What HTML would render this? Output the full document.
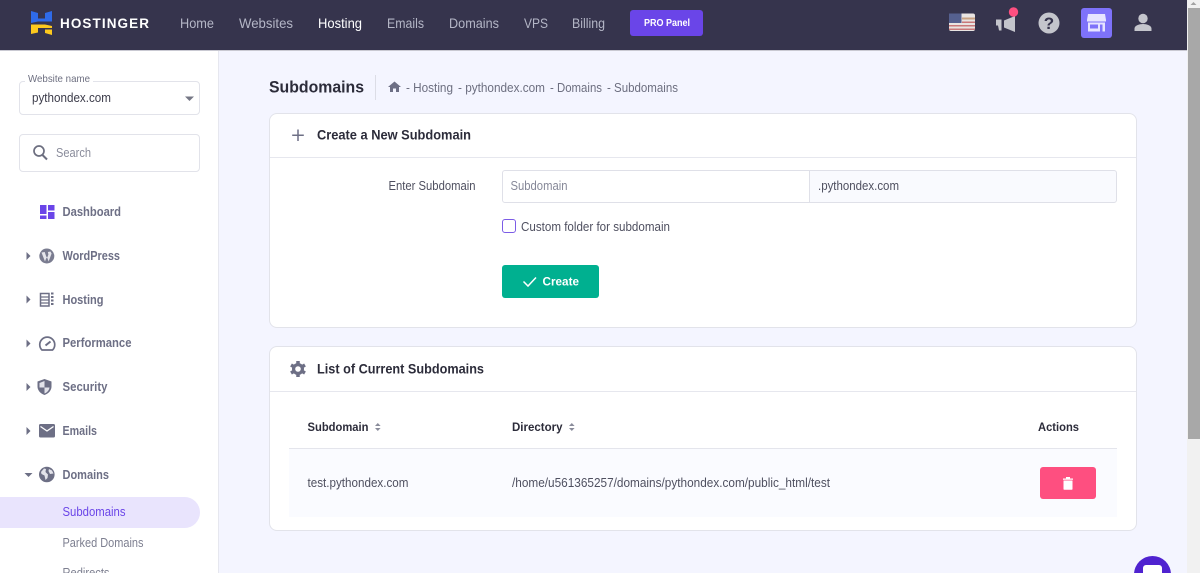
<!DOCTYPE html>
<html lang="en"><head><meta charset="utf-8"><title>Subdomains</title>
<style>
html,body{margin:0;padding:0;width:1200px;height:573px;overflow:hidden;background:#f4f5ff}
#w{position:relative;width:1200px;height:573px;overflow:hidden}
.b{position:absolute;box-sizing:border-box}
svg{position:absolute;left:0;top:0}
text{font-family:"Liberation Sans",sans-serif}
</style></head><body><div id="w">
<div class="b" style="left:0;top:0;width:1187px;height:51px;background:#36344d;border-bottom:1px solid #c9c9d2"></div>
<div class="b" style="left:0;top:51px;width:219px;height:522px;background:#fff;border-right:1px solid #e6e7ef"></div>
<div class="b" style="left:19px;top:81px;width:181px;height:34px;border:1px solid #e2e3ea;border-radius:4px"></div>
<div class="b" style="left:25px;top:76px;width:68px;height:10px;background:#fff"></div>
<div class="b" style="left:19px;top:134px;width:181px;height:38px;border:1px solid #e2e3ea;border-radius:4px"></div>
<div class="b" style="left:0;top:497px;width:200px;height:31px;background:#e9e4fd;border-radius:0 16px 16px 0"></div>
<div class="b" style="left:375px;top:75px;width:1px;height:25px;background:#dcdde6"></div>

<div class="b" style="left:269px;top:113px;width:868px;height:215px;background:#fff;border:1px solid #e2e3ea;border-radius:8px"></div>
<div class="b" style="left:270px;top:157px;width:866px;height:1px;background:#e6e7ee"></div>
<div class="b" style="left:502px;top:170px;width:308px;height:33px;background:#fff;border:1px solid #dfe0e8;border-radius:3px 0 0 3px"></div>
<div class="b" style="left:809px;top:170px;width:308px;height:33px;background:#f9fafe;border:1px solid #dfe0e8;border-radius:0 3px 3px 0"></div>
<div class="b" style="left:502px;top:219px;width:14px;height:14px;background:#fff;border:1.5px solid #7c5ce6;border-radius:3px"></div>
<div class="b" style="left:502px;top:265px;width:97px;height:33px;background:#00b090;border-radius:3px"></div>

<div class="b" style="left:269px;top:346px;width:868px;height:185px;background:#fff;border:1px solid #e2e3ea;border-radius:8px"></div>
<div class="b" style="left:270px;top:391px;width:866px;height:1px;background:#e6e7ee"></div>
<div class="b" style="left:289px;top:448px;width:828px;height:1px;background:#e4e5ec"></div>
<div class="b" style="left:289px;top:449px;width:828px;height:68px;background:#fafbff"></div>
<div class="b" style="left:1040px;top:467px;width:56px;height:32px;background:#fe4f80;border-radius:3px"></div>
<div class="b" style="left:1134px;top:556px;width:37px;height:37px;background:#4f22d0;border-radius:50%"></div>
<div class="b" style="left:1143px;top:565px;width:19px;height:12px;background:#fff;border-radius:3px"></div>

<div class="b" style="left:1187px;top:0;width:13px;height:573px;background:#f1f1f1"></div>
<div class="b" style="left:1188px;top:8px;width:12px;height:431px;background:#a8a8a8"></div>

<svg width="1200" height="573" viewBox="0 0 1200 573" xmlns="http://www.w3.org/2000/svg">
<!-- logo -->
<path d="M31 11l7 2v5.500h7v-5.500l7-2v10.500H38l-7 1.500z" fill="#2f6be8"/>
<path d="M31 24.500h14l7 1.500v2H38v4.500l-7 1.500z" fill="#fdc91e"/>
<path d="M45 29.500h7v5.500l-7-2z" fill="#fdc91e"/>
<text x="60" y="28" font-size="13.500" font-weight="700" fill="#fff" textLength="89" lengthAdjust="spacing">HOSTINGER</text>
<g font-size="14" fill="#b4b6c6">
<text x="180" y="28" textLength="34" lengthAdjust="spacingAndGlyphs">Home</text>
<text x="239" y="28" textLength="54" lengthAdjust="spacingAndGlyphs">Websites</text>
<text x="318" y="28" textLength="44" lengthAdjust="spacingAndGlyphs" fill="#fff">Hosting</text>
<text x="387" y="28" textLength="37" lengthAdjust="spacingAndGlyphs">Emails</text>
<text x="449" y="28" textLength="50" lengthAdjust="spacingAndGlyphs">Domains</text>
<text x="524" y="28" textLength="24" lengthAdjust="spacingAndGlyphs">VPS</text>
<text x="572" y="28" textLength="33" lengthAdjust="spacingAndGlyphs">Billing</text>
</g>
<rect x="630" y="10" width="73" height="26" rx="3" fill="#6a45e8"/>
<text x="644" y="26" font-size="10" font-weight="700" fill="#fff" textLength="46" lengthAdjust="spacingAndGlyphs">PRO Panel</text>

<!-- flag -->
<rect x="949" y="13.500" width="26" height="17.500" rx="2" fill="#e9e4e2"/>
<path d="M962 17.500h13v2h-13z" fill="#c9a283"/>
<path d="M962 21.500h13v1.500h-13z M949 25h26v1.500h-26z M949 28.500h26v1.500h-26z" fill="#c9787a"/>
<rect x="949" y="13.500" width="12.500" height="9.500" fill="#55608f"/>
<!-- megaphone -->
<path d="M996 19.500h5.500v11h-2.500l-1-5h-2z" fill="#c4c5cc"/>
<path d="M1004 20.500L1015 16v16l-11-4.500z" fill="#c4c5cc"/>
<circle cx="1013.500" cy="12" r="4.700" fill="#fe4f80"/>
<!-- help -->
<circle cx="1049" cy="23" r="10.500" fill="#c4c5cc"/>
<text x="1049" y="29" font-size="17" font-weight="700" fill="#36344d" text-anchor="middle">?</text>
<!-- store -->
<rect x="1081" y="8" width="31" height="30" rx="3" fill="#7e72fa"/>
<path d="M1088 14h17l1 6v1.500h-19v-1.500z" fill="#e6e4ff"/>
<path d="M1088 22.500h17v9h-17z" fill="#e6e4ff"/>
<rect x="1090" y="24.500" width="8" height="4" fill="#7e72fa"/>
<rect x="1100" y="24.500" width="2.500" height="7" fill="#7e72fa"/>
<!-- user -->
<circle cx="1143" cy="18.500" r="4.700" fill="#c4c5cc"/>
<path d="M1134.500 31v-2.500c0-3 5-4.500 8.500-4.500s8.500 1.500 8.500 4.500v2.500z" fill="#c4c5cc"/>

<!-- sidebar top -->
<text x="28" y="82" font-size="10.500" fill="#6d6f80" textLength="62" lengthAdjust="spacingAndGlyphs">Website name</text>
<text x="32" y="102" font-size="13" fill="#3c3c4a" textLength="79" lengthAdjust="spacingAndGlyphs">pythondex.com</text>
<path d="M185 96.500h9l-4.500 4.500z" fill="#757785"/>
<circle cx="39" cy="151" r="5" fill="none" stroke="#6d6f80" stroke-width="1.700"/>
<path d="M42.500 155l4.500 4.500" stroke="#6d6f80" stroke-width="2"/>
<text x="56" y="157" font-size="12.500" fill="#8a8c9b" textLength="35" lengthAdjust="spacingAndGlyphs">Search</text>

<!-- sidebar menu -->
<g font-size="12.500" font-weight="700" fill="#6d6f85">
<text x="62.500" y="216" textLength="58.500" lengthAdjust="spacingAndGlyphs">Dashboard</text>
<text x="62.500" y="260" textLength="57.500" lengthAdjust="spacingAndGlyphs">WordPress</text>
<text x="62.500" y="304" textLength="41" lengthAdjust="spacingAndGlyphs">Hosting</text>
<text x="62.500" y="347" textLength="69" lengthAdjust="spacingAndGlyphs">Performance</text>
<text x="62.500" y="391" textLength="45" lengthAdjust="spacingAndGlyphs">Security</text>
<text x="62.500" y="435" textLength="34.500" lengthAdjust="spacingAndGlyphs">Emails</text>
<text x="62.500" y="479" textLength="46.500" lengthAdjust="spacingAndGlyphs">Domains</text>
</g>
<text x="62.500" y="516" font-size="12.500" fill="#6a45e8" textLength="63" lengthAdjust="spacingAndGlyphs">Subdomains</text>
<text x="62.500" y="547" font-size="12.500" fill="#7d7f90" textLength="81" lengthAdjust="spacingAndGlyphs">Parked Domains</text>
<text x="62.500" y="577" font-size="12.500" fill="#7d7f90" textLength="47" lengthAdjust="spacingAndGlyphs">Redirects</text>

<!-- arrows -->
<g fill="#6d6f85">
<path d="M26.500 252l4 4-4 4z M26.500 295.500l4 4-4 4z M26.500 339.500l4 4-4 4z M26.500 383l4 4-4 4z M26.500 427l4 4-4 4z"/>
<path d="M24.500 473h8l-4 4z"/>
</g>
<!-- dashboard icon -->
<path d="M40 205h6.500v9H40z M48 205h6.500v5.500H48z M40 215.500h6.500v3.500H40z M48 212h6.500v7H48z" fill="#6a45e8"/>
<!-- wordpress -->
<circle cx="46.800" cy="256" r="7.500" fill="#7a7c90"/>
<path d="M41.500 252.500l3.500 9 1.800-5 1.800 5 3-8-1.200-2-2.500.5.500 2.500-1.500 4-1.700-5-.5-1.500z" fill="#e6e6ec"/>
<!-- hosting -->
<path d="M40.500 293.500h8.500v12.500h-8.500z" fill="none" stroke="#6d6f85" stroke-width="1.500"/>
<path d="M41 297h8 M41 300h8 M41 303h8" stroke="#6d6f85" stroke-width="1.300"/>
<path d="M51 293.500h2.500 M51 297h2.500 M51 300.500h2.500 M51 304h2.500" stroke="#6d6f85" stroke-width="2"/>
<!-- performance -->
<path d="M42 350a7.500 7.500 0 1 1 10.500 0z" fill="none" stroke="#6d6f85" stroke-width="1.700"/>
<path d="M45.500 345.500l5-4" stroke="#6d6f85" stroke-width="2"/>
<!-- security -->
<path d="M44.500 379l7 2.500v5c0 4-3 7-7 8.500-4-1.500-7-4.500-7-8.500v-5z" fill="#6d6f85"/>
<path d="M44.500 381v6.500h-5v-4.500z M44.500 387.500h5c-.5 3-2.500 5-5 6z" fill="#e3e3ea"/>
<!-- emails -->
<rect x="39" y="424" width="16" height="13.500" rx="1.500" fill="#6d6f85"/>
<path d="M40.500 426.500l6.500 4.500 6.500-4.500" fill="none" stroke="#fff" stroke-width="1.300"/>
<!-- domains -->
<circle cx="46.800" cy="474.500" r="7.800" fill="#6d6f85"/>
<path d="M41 472l3-3.500 2 .5-.5 3 2.500 2.500-.5 3.500-2 2-1-4.500-3-1.500z M49 469l3 1.500 1.500 3-3.500 .5-1.500-3z" fill="#e3e3ea"/>

<!-- heading & breadcrumb -->
<text x="269" y="92.500" font-size="17" font-weight="700" fill="#2c2c3a" textLength="95" lengthAdjust="spacingAndGlyphs">Subdomains</text>
<path d="M394.500 81.500l6.500 5.500h-2v5h-3v-3.500h-3V92h-3v-5h-2z" fill="#6d6f85"/>
<g font-size="12.500" fill="#6d6f80">
<text x="406" y="92" textLength="47" lengthAdjust="spacingAndGlyphs">- Hosting</text>
<text x="458" y="92" textLength="87" lengthAdjust="spacingAndGlyphs">- pythondex.com</text>
<text x="550" y="92" textLength="52" lengthAdjust="spacingAndGlyphs">- Domains</text>
<text x="607" y="92" textLength="71" lengthAdjust="spacingAndGlyphs">- Subdomains</text>
</g>

<!-- card 1 -->
<path d="M298 129.500v11.500 M292.200 135.200h11.600" stroke="#6d6f85" stroke-width="1.500"/>
<text x="317" y="139.500" font-size="13.500" font-weight="700" fill="#2c2c3a" textLength="154" lengthAdjust="spacingAndGlyphs">Create a New Subdomain</text>
<g font-size="12.500">
<text x="388.500" y="190" fill="#4f5060" textLength="87" lengthAdjust="spacingAndGlyphs">Enter Subdomain</text>
<text x="510.500" y="190" fill="#868898" textLength="57" lengthAdjust="spacingAndGlyphs">Subdomain</text>
<text x="818" y="190" fill="#4f5060" textLength="81" lengthAdjust="spacingAndGlyphs">.pythondex.com</text>
<text x="521" y="231" fill="#4f5060" textLength="149" lengthAdjust="spacingAndGlyphs">Custom folder for subdomain</text>
</g>
<path d="M523.500 281.500l4.500 4.500 8-8.500" fill="none" stroke="#fff" stroke-width="1.500"/>
<text x="542.500" y="285.500" font-size="12" font-weight="700" fill="#fff" textLength="36.500" lengthAdjust="spacingAndGlyphs">Create</text>

<!-- card 2 -->
<path d="M298 361v16 M291 365l14 8 M305 365l-14 8" stroke="#6d6f85" stroke-width="3.500"/>
<circle cx="298" cy="369" r="6" fill="#6d6f85"/>
<circle cx="298" cy="369" r="2.800" fill="#fff"/>
<text x="317" y="373.500" font-size="13.500" font-weight="700" fill="#2c2c3a" textLength="167" lengthAdjust="spacingAndGlyphs">List of Current Subdomains</text>
<g font-size="12" font-weight="700" fill="#2c2c3a">
<text x="307.500" y="431" textLength="61" lengthAdjust="spacingAndGlyphs">Subdomain</text>
<text x="512" y="431" textLength="50.500" lengthAdjust="spacingAndGlyphs">Directory</text>
<text x="1038" y="431" textLength="41" lengthAdjust="spacingAndGlyphs">Actions</text>
</g>
<path d="M375 426l2.800-3 2.800 3z M375 428l2.800 3 2.800-3z M569 426l2.800-3 2.800 3z M569 428l2.800 3 2.800-3z" fill="#8a8c9b"/>
<text x="307.500" y="487" font-size="12.500" fill="#4f5060" textLength="101" lengthAdjust="spacingAndGlyphs">test.pythondex.com</text>
<text x="512" y="487" font-size="12.500" fill="#4f5060" textLength="318" lengthAdjust="spacingAndGlyphs">/home/u561365257/domains/pythondex.com/public_html/test</text>
<path d="M1063 478.500h10v1.200h-10z M1066 477h4v1.500h-4z M1063.500 480.500h9v8.500a.8.800 0 0 1-.8.800h-7.400a.8.800 0 0 1-.8-.8z" fill="#fff"/>

<path d="M1193.500 2l3 3h-6z" fill="#a3a3a3"/>
</svg>
</div></body></html>
